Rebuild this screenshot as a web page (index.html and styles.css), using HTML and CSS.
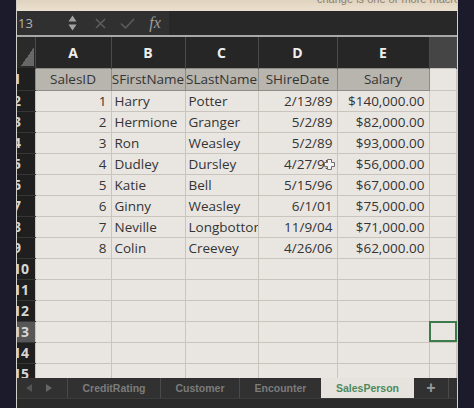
FILE: index.html
```html
<!DOCTYPE html>
<html lang="en">

<head>
  <meta charset="UTF-8">
  <meta name="viewport" content="width=device-width, initial-scale=1.0">
  <title>SalesPerson</title>
  <link rel="stylesheet" href="styles.css">
</head>

<body>
  <main class="screen">
    <div class="notice">
      <span>change is one or more macros that</span>
    </div>

    <div class="formula-bar">
      <span class="name-box">13</span>
      <span class="stepper">
        <svg width="9" height="16" viewBox="0 0 9 16">
          <path d="M0.5 6.5 L4.5 0.5 L8.5 6.5 Z M0.5 9.5 L8.5 9.5 L4.5 15.5 Z" fill="#a3a3a3" />
        </svg>
      </span>
      <span class="fb-icon">
        <svg width="11" height="11" viewBox="0 0 11 11">
          <path d="M1 1 L10 10 M10 1 L1 10" stroke="#5c5c5c" stroke-width="1.6" fill="none" />
        </svg>
      </span>
      <span class="fb-icon">
        <svg width="15" height="11" viewBox="0 0 15 11">
          <path d="M1 5.5 L5.5 10 L14 1" stroke="#5c5c5c" stroke-width="1.6" fill="none" />
        </svg>
      </span>
      <span class="fx">fx</span>
      <div class="formula-input"></div>
    </div>

    <div class="sheet">
      <table class="grid">
        <colgroup>
          <col class="col-row">
          <col class="col-a">
          <col class="col-b">
          <col class="col-c">
          <col class="col-d">
          <col class="col-e">
          <col>
        </colgroup>
        <thead>
          <tr>
            <th class="corner"></th>
            <th>A</th>
            <th>B</th>
            <th>C</th>
            <th>D</th>
            <th>E</th>
            <th class="is-active"></th>
          </tr>
        </thead>
        <tbody>
          <tr class="row-fields">
            <th>1</th>
            <td>SalesID</td>
            <td>SFirstName</td>
            <td>SLastName</td>
            <td>SHireDate</td>
            <td>Salary</td>
            <td class="blank"></td>
          </tr>
          <tr>
            <th>2</th>
            <td class="num">1</td>
            <td>Harry</td>
            <td>Potter</td>
            <td class="num">2/13/89</td>
            <td class="num">$140,000.00</td>
            <td></td>
          </tr>
          <tr>
            <th>3</th>
            <td class="num">2</td>
            <td>Hermione</td>
            <td>Granger</td>
            <td class="num">5/2/89</td>
            <td class="num">$82,000.00</td>
            <td></td>
          </tr>
          <tr>
            <th>4</th>
            <td class="num">3</td>
            <td>Ron</td>
            <td>Weasley</td>
            <td class="num">5/2/89</td>
            <td class="num">$93,000.00</td>
            <td></td>
          </tr>
          <tr>
            <th>5</th>
            <td class="num">4</td>
            <td>Dudley</td>
            <td>Dursley</td>
            <td class="num has-cursor">4/27/95
              <svg class="cursor" width="11" height="11" viewBox="0 0 11 11">
                <path d="M3.5 0.5 H7.5 V3.5 H10.5 V7.5 H7.5 V10.5 H3.5 V7.5 H0.5 V3.5 H3.5 Z" fill="#f4f4f4" stroke="#6e6e6e" />
              </svg>
            </td>
            <td class="num">$56,000.00</td>
            <td></td>
          </tr>
          <tr>
            <th>6</th>
            <td class="num">5</td>
            <td>Katie</td>
            <td>Bell</td>
            <td class="num">5/15/96</td>
            <td class="num">$67,000.00</td>
            <td></td>
          </tr>
          <tr>
            <th>7</th>
            <td class="num">6</td>
            <td>Ginny</td>
            <td>Weasley</td>
            <td class="num">6/1/01</td>
            <td class="num">$75,000.00</td>
            <td></td>
          </tr>
          <tr>
            <th>8</th>
            <td class="num">7</td>
            <td>Neville</td>
            <td>Longbottom</td>
            <td class="num">11/9/04</td>
            <td class="num">$71,000.00</td>
            <td></td>
          </tr>
          <tr>
            <th>9</th>
            <td class="num">8</td>
            <td>Colin</td>
            <td>Creevey</td>
            <td class="num">4/26/06</td>
            <td class="num">$62,000.00</td>
            <td></td>
          </tr>
          <tr>
            <th>10</th>
            <td></td><td></td><td></td><td></td><td></td><td></td>
          </tr>
          <tr>
            <th>11</th>
            <td></td><td></td><td></td><td></td><td></td><td></td>
          </tr>
          <tr>
            <th>12</th>
            <td></td><td></td><td></td><td></td><td></td><td></td>
          </tr>
          <tr>
            <th class="is-active">13</th>
            <td></td><td></td><td></td><td></td><td></td><td class="is-selected"></td>
          </tr>
          <tr>
            <th>14</th>
            <td></td><td></td><td></td><td></td><td></td><td></td>
          </tr>
          <tr>
            <th>15</th>
            <td></td><td></td><td></td><td></td><td></td><td></td>
          </tr>
        </tbody>
      </table>
    </div>

    <nav class="tabs">
      <span class="tab-nav">
        <svg width="6" height="8" viewBox="0 0 6 8">
          <path d="M6 0 V8 L0 4 Z" fill="#555" />
        </svg>
        <svg width="6" height="8" viewBox="0 0 6 8">
          <path d="M0 0 V8 L6 4 Z" fill="#666" />
        </svg>
      </span>
      <span class="tab tab-credit">CreditRating</span>
      <span class="tab tab-customer">Customer</span>
      <span class="tab tab-encounter">Encounter</span>
      <span class="tab tab-sales is-current">SalesPerson</span>
      <span class="tab tab-add">+</span>
      <span class="tab tab-rest"></span>
    </nav>

    <div class="status"></div>
  </main>
</body>

</html>
```

FILE: styles.css
```css
*,
*::before,
*::after {
  box-sizing: border-box;
}

:root {
  /* COLORS */
  --frame: #1c1b2b;
  --paper: #e9e6e1;
  --gridline: #c9c4bc;
  --field-fill: #b8b4ae;
  --field-line: #8f8b86;
  --ink: #343434;
  --chrome-dark: #262626;
  --chrome-line: #4a4a4a;
  --tab-text: #7c7c7c;
  --accent-green: #3e7b4c;

  /* FONT FAMILY */
  --ff-cells: "Open Sans", sans-serif;
  --ff-ui: "Liberation Sans", sans-serif;
}

body {
  margin: 0;

  background-color: var(--frame);
  font-family: var(--ff-cells);
}

.screen {
  display: flex;
  flex-direction: column;

  height: 408px;
  margin: 0 16px;

  overflow: hidden;

  border-inline: 1px solid #d2cfcb;
  background-color: #2b2b2b;
}

/* top strip, a dialog cut off by the photo */
.notice {
  flex: none;

  height: 11px;
  padding-left: 300px;

  overflow: hidden;
  white-space: nowrap;

  font: 11px/11px var(--ff-ui);
  color: #8c7f70;

  background: linear-gradient(#e0d3bf, #ebe0cf);
}

.notice span {
  display: block;
  margin-top: -6px;
}

/* FORMULA BAR */
.formula-bar {
  display: flex;
  align-items: center;
  flex: none;

  height: 26px;

  border-bottom: 2px solid #a8a8a8;
  background-color: #303030;
}

.name-box {
  width: 40px;
  padding-left: 1px;

  font-size: 13px;
  color: #b3b3b3;
}

.stepper,
.fb-icon {
  display: flex;
  justify-content: center;
}

.stepper {
  width: 30px;
}

.fb-icon {
  width: 27px;
}

.fx {
  width: 28px;

  text-align: center;
  font: italic 16px "Liberation Serif", serif;
  color: #9c9c9c;
}

.formula-input {
  flex: 1;
  align-self: stretch;

  background-color: #282828;
}

/* SHEET */
.sheet {
  flex: none;

  height: 341px;

  overflow: hidden;

  background-color: var(--paper);
}

.grid {
  width: 440px;

  table-layout: fixed;
  border-collapse: collapse;
}

.col-row {
  width: 18px;
}

.col-a {
  width: 76px;
}

.col-b {
  width: 74px;
}

.col-c {
  width: 73px;
}

.col-d {
  width: 79px;
}

.col-e {
  width: 92px;
}

.grid thead th {
  height: 31px;
  padding: 0;

  border-right: 1px solid var(--chrome-line);

  font-size: 14px;
  font-weight: 700;
  color: #efefef;

  background-color: var(--chrome-dark);
}

.grid thead th.corner {
  background: #2a2a2a linear-gradient(to bottom right, transparent 50%, #676767 50%) no-repeat right 1px bottom 2px / 13px 19px;
}

.grid thead th.is-active {
  background-color: #454545;
}

.grid tbody th {
  height: 21px;
  padding: 0;

  overflow: hidden;
  white-space: nowrap;

  border-bottom: 1px solid #363636;

  text-align: left;
  text-indent: -4px;
  font-size: 14px;
  font-weight: 700;
  color: #d6d6d6;

  background-color: #1f1f1f;
}

.grid tbody th.is-active {
  background-color: #575757;
}

.grid td {
  height: 21px;
  padding: 0 3px;

  overflow: hidden;
  white-space: nowrap;

  border: 1px solid var(--gridline);

  font-size: 13.5px;
  color: var(--ink);
}

.grid td.num {
  padding-right: 4px;

  text-align: right;
}

.row-fields th,
.row-fields td {
  height: 22px;
}

.row-fields td {
  padding: 0;

  border-color: var(--field-line);

  text-align: center;

  background-color: var(--field-fill);
}

.row-fields td.blank {
  border-color: var(--gridline);

  background-color: var(--paper);
}

.has-cursor {
  position: relative;
}

.cursor {
  position: absolute;
  top: 5px;
  right: 2px;
}

.grid td.is-selected {
  outline: 2px solid var(--accent-green);
  outline-offset: -2px;
}

/* SHEET TABS */
.tabs {
  display: flex;
  flex: none;

  height: 20px;

  font: 700 10.5px var(--ff-ui);
  color: var(--tab-text);

  background-color: #313131;
}

.tab-nav {
  display: flex;
  align-items: center;
  gap: 14px;

  width: 50px;
  padding-left: 9px;
}

.tab {
  display: flex;
  align-items: center;
  justify-content: center;

  border-left: 1px solid var(--chrome-line);
}

.tab-credit {
  width: 93px;
}

.tab-customer {
  width: 79px;
}

.tab-encounter {
  width: 82px;
}

.tab-sales {
  width: 93px;
}

.tab-add {
  width: 34px;

  font-size: 16px;
  color: #9a9a9a;
}

.tab-rest {
  flex: 1;
}

.tab.is-current {
  border-left: none;

  color: #4c8a5c;
  background-color: #e6e3de;
}

.tab.is-current + .tab {
  border-left: none;
}

.status {
  flex: 1;

  border-top: 1px solid #3c3c3c;
  background-color: #2a2a2a;
}
```
